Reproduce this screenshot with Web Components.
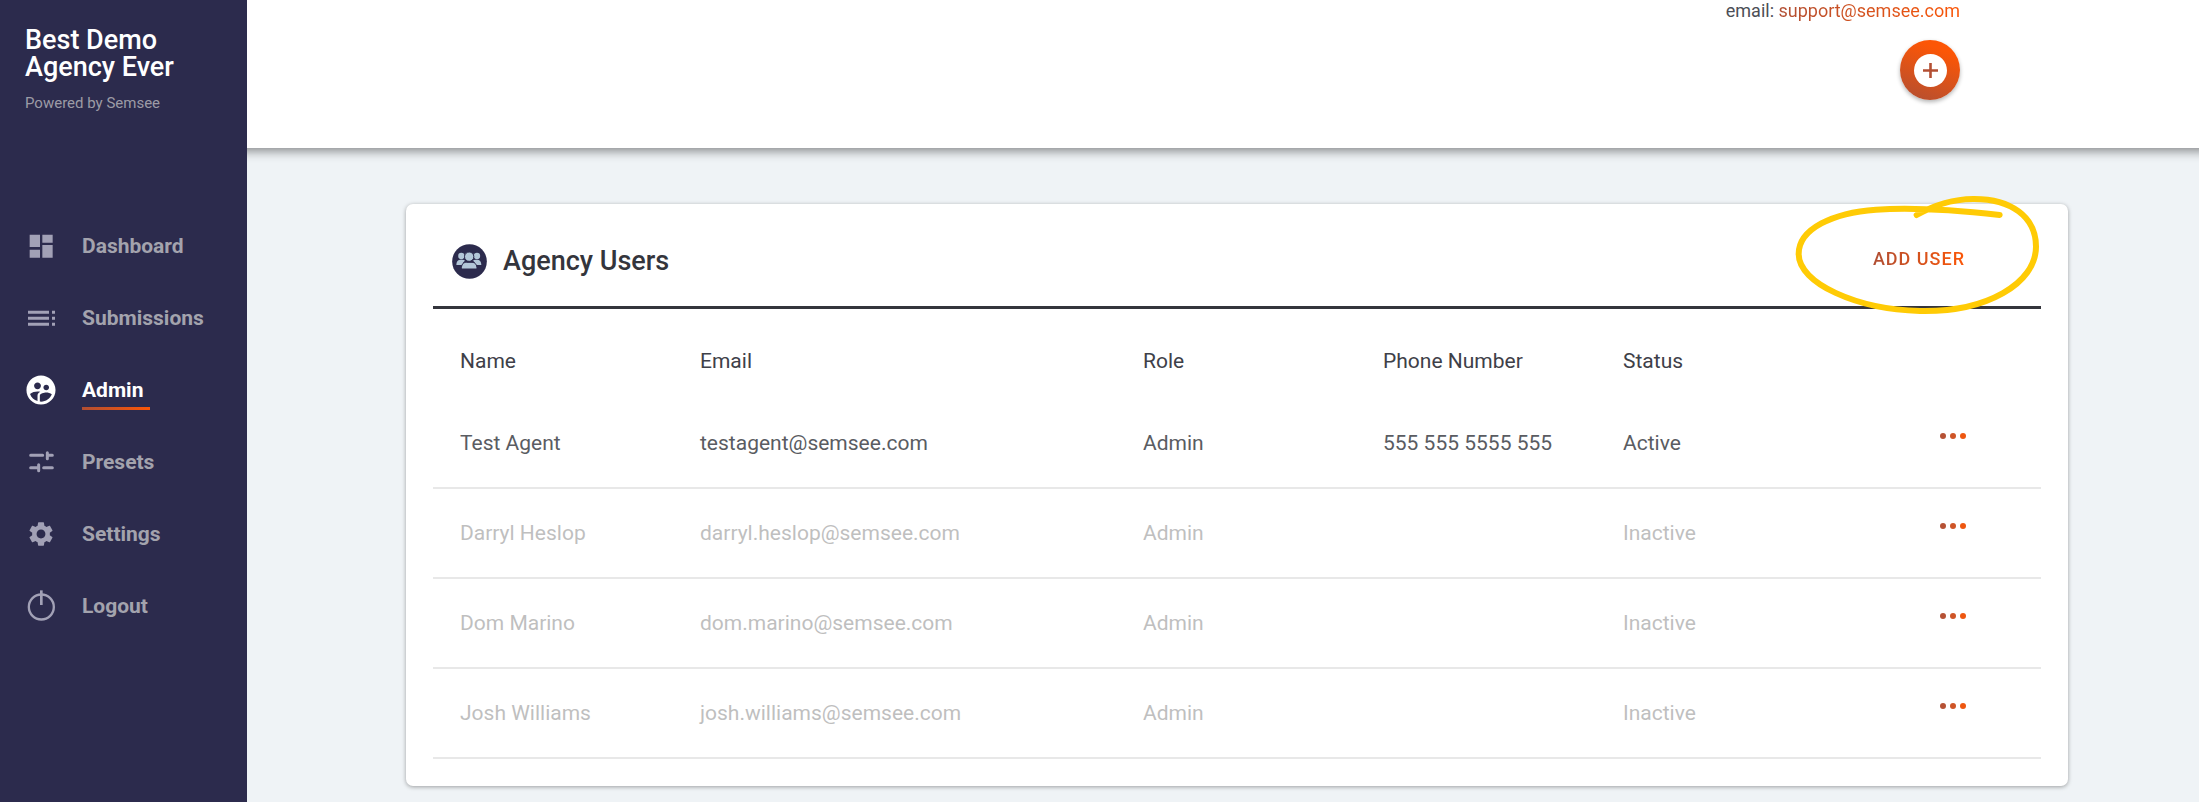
<!DOCTYPE html>
<html lang="en">
<head>
<meta charset="utf-8">
<meta name="viewport" content="width=device-width, initial-scale=1">
<title>Agency Users</title>
<style>
  html, body {
    height: 100%;
  }

  body {
    margin: 0;
    font-family: Roboto, 'Liberation Sans', sans-serif;
    --navy: #2c2b4d;
    --page: #eff3f6;
    --ink: #34353c;
    --accent-from: #b04e33;
    --accent-to: #fb5607;
  }
</style>
</head>
<body>
<agency-app>
  <side-bar slot="side" name="Best Demo Agency Ever" tagline="Powered by Semsee">
    <nav-item icon="dashboard">Dashboard</nav-item>
    <nav-item icon="submissions">Submissions</nav-item>
    <nav-item icon="admin" active>Admin</nav-item>
    <nav-item icon="presets">Presets</nav-item>
    <nav-item icon="settings">Settings</nav-item>
    <nav-item icon="logout">Logout</nav-item>
  </side-bar>
  <top-bar slot="top" email="support@semsee.com"></top-bar>
  <panel-card heading="Agency Users" action="Add user">
    <users-table></users-table>
  </panel-card>
</agency-app>

<script>
const ICONS = {
  dashboard: `<svg viewBox="0 0 96 96"><path d="M14 14h31v37H14zM14 59h31v24H14zM52 14h31v24H52zM52 45h31v38H52z"/></svg>`,
  submissions: `<svg viewBox="0 0 96 96"><path d="M9 26h63v9H9zM9 44h63v9H9zM9 62h63v9H9zM81 26h9v9h-9zM81 44h9v9h-9zM81 62h9v9h-9z"/></svg>`,
  admin: `<svg viewBox="1 1 22 22"><path d="M11.99 2c-5.52 0-10 4.48-10 10s4.48 10 10 10 10-4.48 10-10-4.48-10-10-10zm3.61 6.34c1.07 0 1.93.86 1.93 1.93 0 1.07-.86 1.93-1.93 1.93-1.07 0-1.93-.86-1.93-1.93-.01-1.07.86-1.93 1.93-1.93zm-6-1.58c1.3 0 2.36 1.06 2.36 2.36 0 1.3-1.06 2.36-2.36 2.36s-2.36-1.06-2.36-2.36c0-1.31 1.05-2.36 2.36-2.36zm0 9.13v3.75c-2.4-.75-4.3-2.6-5.14-4.96 1.05-1.12 3.67-1.69 5.14-1.69.53 0 1.2.08 1.9.22-1.64.87-1.9 2.02-1.9 2.68zM11.99 20c-.27 0-.53-.01-.79-.04v-4.07c0-1.42 2.94-2.13 4.4-2.13 1.07 0 2.92.39 3.84 1.15-1.17 2.97-4.06 5.09-7.45 5.09z"/></svg>`,
  presets: `<svg viewBox="0 0 96 96"><g fill="none" stroke="currentColor" stroke-width="9" stroke-linecap="round"><path d="M17 28h36M67 20v18M67 28h15M17 65h22M41 56v18M56 65h26"/></g></svg>`,
  settings: `<svg viewBox="-1 -1 26 26"><path d="M19.14 12.94c.04-.3.06-.61.06-.94 0-.32-.02-.64-.07-.94l2.03-1.58c.18-.14.23-.41.12-.61l-1.92-3.32c-.12-.22-.37-.29-.59-.22l-2.39.96c-.5-.38-1.03-.7-1.62-.94l-.36-2.54c-.04-.24-.24-.41-.48-.41h-3.84c-.24 0-.43.17-.47.41l-.36 2.54c-.59.24-1.13.57-1.62.94l-2.39-.96c-.22-.08-.47 0-.59.22L2.74 8.87c-.12.21-.08.47.12.61l2.03 1.58c-.05.3-.09.63-.09.94s.02.64.07.94l-2.03 1.58c-.18.14-.23.41-.12.61l1.92 3.32c.12.22.37.29.59.22l2.39-.96c.5.38 1.03.7 1.62.94l.36 2.54c.05.24.24.41.48.41h3.84c.24 0 .44-.17.47-.41l.36-2.54c.59-.24 1.13-.56 1.62-.94l2.39.96c.22.08.47 0 .59-.22l1.92-3.32c.12-.22.07-.47-.12-.61l-2.01-1.58zM12 15.6c-1.98 0-3.6-1.62-3.6-3.6s1.62-3.6 3.6-3.6 3.6 1.62 3.6 3.6-1.62 3.6-3.6 3.6z"/></svg>`,
  logout: `<svg viewBox="0 0 96 96"><g fill="none" stroke="currentColor"><circle cx="49" cy="51" r="37.5" stroke-width="7"/><path d="M49 1v44" stroke-width="8"/></g></svg>`
};

const USERS = [
  { name: 'Test Agent', email: 'testagent@semsee.com', role: 'Admin', phone: '555 555 5555 555', status: 'Active' },
  { name: 'Darryl Heslop', email: 'darryl.heslop@semsee.com', role: 'Admin', phone: '', status: 'Inactive' },
  { name: 'Dom Marino', email: 'dom.marino@semsee.com', role: 'Admin', phone: '', status: 'Inactive' },
  { name: 'Josh Williams', email: 'josh.williams@semsee.com', role: 'Admin', phone: '', status: 'Inactive' }
];

class AgencyApp extends HTMLElement {
  constructor() {
    super();
    this.attachShadow({ mode: 'open' });
  }

  connectedCallback() {
    this.shadowRoot.innerHTML = `
      <style>
        :host {
          display: grid;
          grid-template-columns: 247px minmax(0, 1fr);
          min-height: 100%;
          background: var(--page);
        }

        .content {
          display: flex;
          flex-direction: column;
        }

        main {
          padding: 56px 131px 16px 159px;
        }
      </style>
      <slot name="side"></slot>
      <div class="content">
        <slot name="top"></slot>
        <main><slot></slot></main>
      </div>
    `;
  }
}

class SideBar extends HTMLElement {
  constructor() {
    super();
    this.attachShadow({ mode: 'open' });
  }

  connectedCallback() {
    this.shadowRoot.innerHTML = `
      <style>
        :host {
          display: block;
          background: var(--navy);
        }

        header {
          box-sizing: border-box;
          height: 210px;
          padding: 27px 60px 0 25px;
        }

        h1 {
          margin: 0;
          font-size: 27px;
          font-weight: 500;
          line-height: 27px;
          color: #fff;
        }

        p {
          margin: 12px 0 0;
          font-size: 15px;
          line-height: 20px;
          color: #9c9ba6;
        }
      </style>
      <header>
        <h1>${this.getAttribute('name')}</h1>
        <p>${this.getAttribute('tagline')}</p>
      </header>
      <nav><slot></slot></nav>
    `;
  }
}

class NavItem extends HTMLElement {
  constructor() {
    super();
    this.attachShadow({ mode: 'open' });
  }

  connectedCallback() {
    this.shadowRoot.innerHTML = `
      <style>
        :host {
          display: block;
        }

        a {
          display: flex;
          align-items: center;
          gap: 25px;
          height: 72px;
          padding-left: 25px;
          font-size: 21px;
          font-weight: 700;
          color: #a3a3ad;
          text-decoration: none;
        }

        svg {
          flex: none;
          width: 32px;
          height: 32px;
          fill: currentColor;
          color: #a2a1b6;
        }

        span {
          padding: 5px 7px 5px 0;
          line-height: 24px;
          border-block: 3px solid transparent;
        }

        :host([active]) a,
        :host([active]) svg {
          color: #fff;
        }

        :host([active]) span {
          border-image: linear-gradient(to right, var(--accent-from), var(--accent-to)) 1;
          border-top-width: 0;
          padding-top: 8px;
        }
      </style>
      <a href="#">${ICONS[this.getAttribute('icon')]}<span><slot></slot></span></a>
    `;
  }
}

class TopBar extends HTMLElement {
  constructor() {
    super();
    this.attachShadow({ mode: 'open' });
  }

  connectedCallback() {
    const email = this.getAttribute('email');

    this.shadowRoot.innerHTML = `
      <style>
        :host {
          display: flex;
          flex-direction: column;
          align-items: flex-end;
          gap: 18px;
          padding: 0 239px 48px 0;
          background: #fff;
          box-shadow: 0 -9px 10px 12px rgba(0, 0, 0, 0.45);
          clip-path: inset(0 0 -20px 0);
        }

        p {
          margin: 0;
          font-size: 18px;
          line-height: 22px;
          color: #4c4e56;
        }

        a {
          color: transparent;
          text-decoration: none;
          background: linear-gradient(to right, var(--accent-from), var(--accent-to));
          background-clip: text;
          -webkit-background-clip: text;
        }

        button {
          display: grid;
          place-items: center;
          width: 60px;
          height: 60px;
          padding: 0;
          border: 0;
          border-radius: 50%;
          background: linear-gradient(20deg, var(--accent-from), #fc5606 80%);
          box-shadow: 0 2px 4px rgba(0, 0, 0, 0.3);
        }
      </style>
      <p>email: <a href="mailto:${email}">${email}</a></p>
      <button type="button" aria-label="New">
        <svg width="33" height="33" viewBox="0 0 33 33">
          <circle cx="16.5" cy="16.5" r="16.5" fill="#fff"/>
          <path d="M16.5 9v15M9 16.5h15" stroke="#b34f33" stroke-width="2.6"/>
        </svg>
      </button>
    `;
  }
}

class PanelCard extends HTMLElement {
  constructor() {
    super();
    this.attachShadow({ mode: 'open' });
  }

  connectedCallback() {
    this.shadowRoot.innerHTML = `
      <style>
        :host {
          display: block;
          padding: 27px;
          border-radius: 7px;
          background: #fff;
          box-shadow: 0 1px 4px rgba(0, 0, 0, 0.35);
        }

        header {
          display: flex;
          align-items: flex-start;
          justify-content: space-between;
          height: 75px;
          padding: 0 52px 0 19px;
          border-bottom: 3px solid var(--ink);
        }

        .title {
          display: flex;
          align-items: center;
          gap: 16px;
          height: 60px;
        }

        h2 {
          margin: 0;
          font-size: 27px;
          font-weight: 500;
          color: var(--ink);
        }

        .action {
          position: relative;
        }

        button {
          height: 54px;
          padding: 0 24px;
          border: 0;
          background: none;
          font: 500 18px Roboto, 'Liberation Sans', sans-serif;
          letter-spacing: 1px;
          text-transform: uppercase;
        }

        button span {
          color: transparent;
          background: linear-gradient(to right, var(--accent-from), var(--accent-to));
          background-clip: text;
          -webkit-background-clip: text;
        }

        /* hand-drawn ring over the action */
        .ring {
          position: absolute;
          top: -51px;
          right: -101px;
          pointer-events: none;
        }
      </style>
      <header>
        <div class="title">
          <svg width="35" height="35" viewBox="0 0 105 105">
            <circle cx="52.5" cy="52.5" r="52" fill="#2c2b4d"/>
            <g fill="#b3c7d8">
              <circle cx="28" cy="36" r="9.5"/>
              <circle cx="75" cy="36" r="9.5"/>
              <path d="M13 63c0-11 5-16 13-16h6c3 0 5 1 7 3-4 3-7 7-9 13z"/>
              <path d="M88 63c0-11-5-16-13-16h-5c-3 0-5 1-7 3 4 3 7 7 9 13z"/>
            </g>
            <g fill="#b3c7d8" stroke="#2c2b4d" stroke-width="3">
              <circle cx="51.5" cy="38" r="14"/>
              <path d="M28 75c0-14 6-20 15-20h17c9 0 15 6 15 20z"/>
            </g>
          </svg>
          <h2>${this.getAttribute('heading')}</h2>
        </div>
        <div class="action">
          <button type="button"><span>${this.getAttribute('action')}</span></button>
          <svg class="ring" width="320" height="150" viewBox="0 0 960 450" fill="none" stroke="#ffcb05" stroke-width="18" stroke-linecap="round" stroke-linejoin="round">
            <path d="M689 105C540 88 420 82 318 89C190 98 86 146 86 222C86 310 260 388 450 393C650 397 798 310 798 200C798 110 722 56 610 57C540 58 490 77 440 105"/>
          </svg>
        </div>
      </header>
      <slot></slot>
    `;
  }
}

class UsersTable extends HTMLElement {
  constructor() {
    super();
    this.attachShadow({ mode: 'open' });
  }

  connectedCallback() {
    this.shadowRoot.innerHTML = `
      <style>
        :host {
          display: block;
        }

        table {
          width: 100%;
          table-layout: fixed;
          border-collapse: separate;
          border-spacing: 0;
          font-size: 21px;
          line-height: 24px;
          text-align: left;
          color: #5a5c62;
        }

        col {
          width: 240px;
        }

        col.email {
          width: auto;
        }

        col.menu {
          width: 205px;
        }

        th {
          height: 90px;
          padding: 14px 0 0 27px;
          box-sizing: border-box;
          font-weight: 400;
          color: #3e4048;
        }

        td {
          height: 90px;
          box-sizing: border-box;
          padding: 0 0 0 27px;
          border-bottom: 2px solid #e8e8e8;
        }

        tr.inactive {
          color: #bfbfbf;
        }

        td.menu {
          padding: 0 75px 16px 0;
          text-align: right;
        }

        button {
          padding: 8px 0;
          border: 0;
          background: none;
          vertical-align: middle;
        }

        button svg {
          display: block;
        }
      </style>
      <table>
        <colgroup><col><col class="email"><col><col><col><col class="menu"></colgroup>
        <thead>
          <tr><th>Name</th><th>Email</th><th>Role</th><th>Phone Number</th><th>Status</th><th></th></tr>
        </thead>
        <tbody>
          ${USERS.map(user => `
            <tr class="${user.status.toLowerCase()}">
              <td>${user.name}</td>
              <td>${user.email}</td>
              <td>${user.role}</td>
              <td>${user.phone}</td>
              <td>${user.status}</td>
              <td class="menu">
                <button type="button" aria-label="Actions for ${user.name}">
                  <svg width="26" height="6" viewBox="0 0 26 6">
                    <circle cx="3" cy="3" r="3" fill="#b65235"/>
                    <circle cx="13" cy="3" r="3" fill="#cf5527"/>
                    <circle cx="23" cy="3" r="3" fill="#ee5711"/>
                  </svg>
                </button>
              </td>
            </tr>
          `).join('')}
        </tbody>
      </table>
    `;
  }
}

customElements.define('agency-app', AgencyApp);
customElements.define('side-bar', SideBar);
customElements.define('nav-item', NavItem);
customElements.define('top-bar', TopBar);
customElements.define('panel-card', PanelCard);
customElements.define('users-table', UsersTable);
</script>
</body>
</html>
